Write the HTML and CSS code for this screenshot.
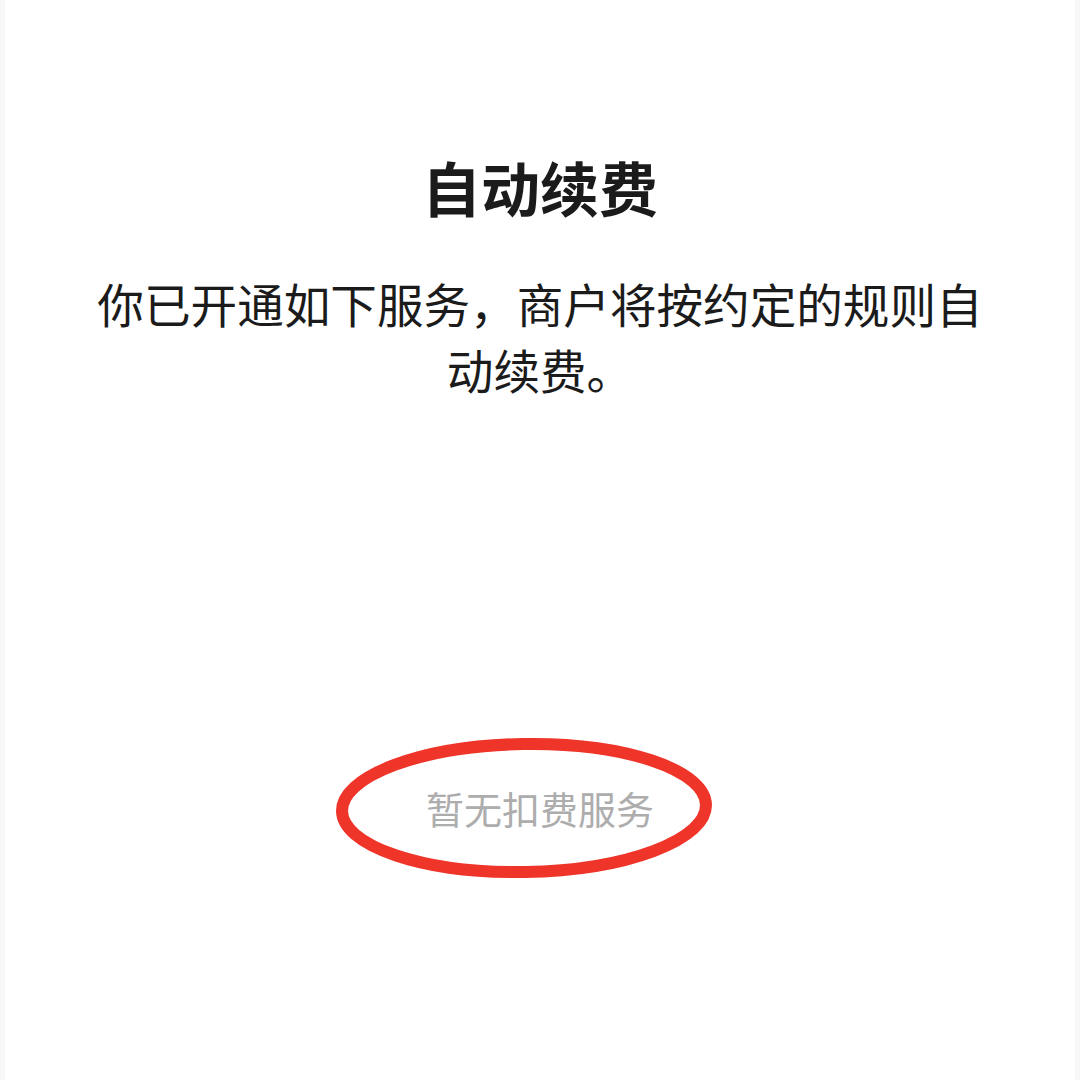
FILE: index.html
```html
<!DOCTYPE html>
<html lang="zh-CN">
<head>
    <meta charset="UTF-8">
    <meta name="viewport" content="width=device-width, initial-scale=1.0">
    <title>自动续费</title>
    <link rel="stylesheet" href="styles.css">
</head>
<body>
    <div class="page">
        <h1 class="title">自动续费</h1>
        <p class="desc">你已开通如下服务，商户将按约定的规则自动续费。</p>

        <div class="empty">
            <span>暂无扣费服务</span>
            <!-- 红笔圈出的标注 -->
            <svg class="mark" width="400" height="160" viewBox="0 0 400 160">
                <ellipse cx="200" cy="80" rx="182" ry="64" fill="none" stroke="#ef3429" stroke-width="12" transform="rotate(-1 200 80)"/>
            </svg>
        </div>
    </div>
</body>
</html>
```

FILE: styles.css
```css
html, body {
    margin: 0;
    padding: 0;
    background: #fff;
}
body {
    font-family: "Noto Sans CJK SC", "Noto Sans", sans-serif;
    color: #1b1b1b;
}
.page {
    width: 1080px;
    height: 1080px;
    box-sizing: border-box;
    padding-top: 147px;
    display: flex;
    flex-direction: column;
    align-items: center;
    border-left: 5px solid #f8f8f8;
    border-right: 5px solid #f8f8f8;
}
.title {
    margin: 0;
    font-size: 59px;
    font-weight: 700;
    line-height: 80px;
}
.desc {
    width: 900px;
    margin: 43px 0 0;
    font-size: 46.6px;
    line-height: 66px;
    text-align: center;
}
.empty {
    position: relative;
    margin-top: 376px;
    font-size: 38px;
    line-height: 60px;
    color: #adadad;
}
.mark {
    position: absolute;
    left: 50%;
    top: -50px;
    margin-left: -216px;
}
```
